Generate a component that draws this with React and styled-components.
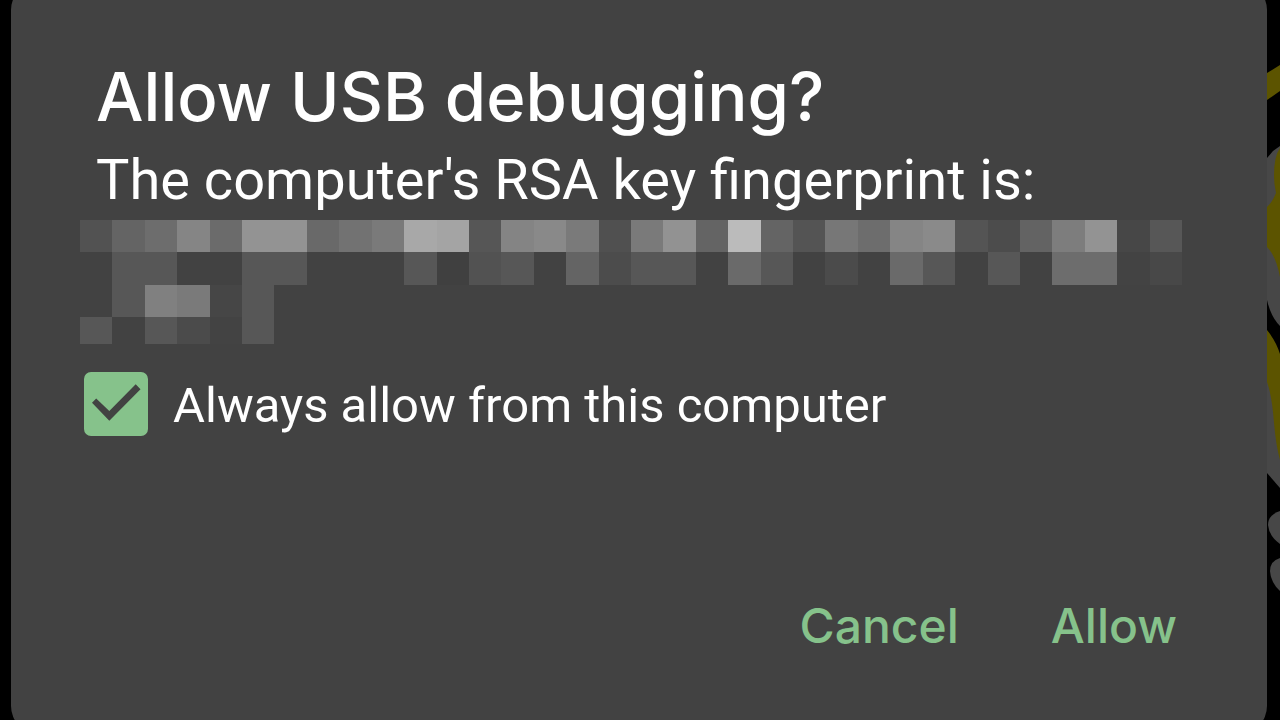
import React, { useState } from 'react';
import styled, { createGlobalStyle } from 'styled-components';

const COLUMNS = 34;

// One entry per mosaic row: [column, grey level]
const fingerprintRows = [
  [
    [0, 82], [1, 100], [2, 109], [3, 133], [4, 107], [5, 147], [6, 147], [7, 105],
    [8, 114], [9, 122], [10, 168], [11, 164], [12, 86], [13, 132], [14, 137],
    [15, 122], [16, 80], [17, 122], [18, 146], [19, 100], [20, 187], [21, 100],
    [22, 84], [23, 119], [24, 109], [25, 133], [26, 138], [27, 84], [28, 76],
    [29, 99], [30, 125], [31, 147], [32, 71], [33, 87],
  ],
  [
    [1, 87], [2, 87], [5, 87], [6, 87], [10, 87], [11, 64], [12, 82], [13, 87],
    [15, 100], [16, 76], [17, 87], [18, 87], [20, 106], [21, 87], [23, 75],
    [25, 106], [26, 87], [28, 87], [30, 109], [31, 109], [32, 67], [33, 72],
  ],
  [[1, 87], [2, 128], [3, 122], [4, 70], [5, 87]],
  [[0, 87], [2, 87], [3, 75], [4, 67], [5, 87]],
];

const App = () => {
  const [always, setAlways] = useState(true);

  return (
    <Screen>
      <GlobalStyle />
      <Wallpaper width="13" height="720" viewBox="0 0 13 720" aria-hidden="true">
        <g fill="#474747">
          <path d="M0 158L6 151L13 146V326Q5 318 1 304L0 300Z" />
          <path d="M0 380H13V488L0 473Z" />
          <path d="M13 511Q1 515 1 525Q2 536 13 544Z" />
          <path d="M13 558Q3 561 3 571Q4 583 13 591Z" />
        </g>
        <g fill="#5c5400">
          <path d="M0 73L13 65V91L0 100Z" />
          <path d="M13 148Q7 156 7 176Q7 184 9 193Q5 203 0 207V247Q9 256 13 277Z" />
          <path d="M0 330Q9 341 13 354V460Q9 446 7 423Q5 396 0 382Z" />
        </g>
      </Wallpaper>
      <Dialog role="dialog" aria-labelledby="dialog-title">
        <Title id="dialog-title">Allow USB debugging?</Title>
        <Message>The computer's RSA key fingerprint is:</Message>
        <Mosaic>
          {fingerprintRows.map((row, rowIndex) =>
            row.map(([column, level]) => (
              <Cell
                key={`${rowIndex}-${column}`}
                $row={rowIndex + 1}
                $column={column + 1}
                $level={level}
              />
            ))
          )}
        </Mosaic>
        <Option>
          <CheckboxBox>
            <Checkbox
              type="checkbox"
              checked={always}
              onChange={(e) => setAlways(e.target.checked)}
            />
            {always && (
              <Tick viewBox="0 0 64 64" aria-hidden="true">
                <path d="M8 30.7L12.2 26.4L25.3 39L51.7 12.3L56.5 17.2L25.3 48.7Z" />
              </Tick>
            )}
          </CheckboxBox>
          Always allow from this computer
        </Option>
        <Actions>
          <ActionButton type="button">Cancel</ActionButton>
          <ActionButton type="button">Allow</ActionButton>
        </Actions>
      </Dialog>
    </Screen>
  );
};

const GlobalStyle = createGlobalStyle`
  * {
    box-sizing: border-box;
  }

  body {
    margin: 0;
    background: #000;
  }
`;

const Screen = styled.main`
  position: relative;
  display: flex;
  height: 100vh;
  overflow: hidden;
  background: #000;
`;

const Wallpaper = styled.svg`
  position: absolute;
  top: 0;
  right: 0;
`;

const Dialog = styled.section`
  flex: 1;
  display: flex;
  flex-direction: column;
  margin: -18px 13px -14px 11px;
  padding: 72px 85px 76px 69px;
  border-radius: 28px;
  background: #424242;
  color: #fff;
  font-family: Roboto, sans-serif;
`;

const Title = styled.h1`
  margin: 0 16px;
  font-family: Inter, sans-serif;
  font-size: 67px;
  font-weight: 500;
  line-height: 86px;
`;

const Message = styled.p`
  margin: 0 16px;
  font-size: 56px;
  line-height: 80px;
`;

const Mosaic = styled.div`
  display: grid;
  grid-template-columns: repeat(${COLUMNS}, 1fr);
  grid-template-rows: 32px 33px 32px 27px;
`;

const Cell = styled.span`
  grid-row: ${(props) => props.$row};
  grid-column: ${(props) => props.$column};
  background: ${({ $level }) => `rgb(${$level}, ${$level}, ${$level})`};
`;

const Option = styled.label`
  display: flex;
  align-items: flex-start;
  gap: 25px;
  margin: 28px 4px 0;
  font-size: 49px;
  line-height: 68px;
`;

const CheckboxBox = styled.span`
  position: relative;
  width: 64px;
  height: 64px;
`;

const Checkbox = styled.input`
  appearance: none;
  display: block;
  width: 64px;
  height: 64px;
  margin: 0;
  border: 6px solid #86c28b;
  border-radius: 7px;

  &:checked {
    background: #86c28b;
  }
`;

const Tick = styled.svg`
  position: absolute;
  inset: 0;
  fill: #424242;
  pointer-events: none;
`;

const Actions = styled.div`
  display: flex;
  justify-content: flex-end;
  gap: 92px;
  margin-top: auto;
  padding-right: 5px;
`;

const ActionButton = styled.button`
  padding: 0;
  border: 0;
  background: none;
  color: #86c28b;
  font-family: Inter, sans-serif;
  font-size: 48px;
  font-weight: 500;
  line-height: 64px;
  cursor: pointer;
`;

export default App;
